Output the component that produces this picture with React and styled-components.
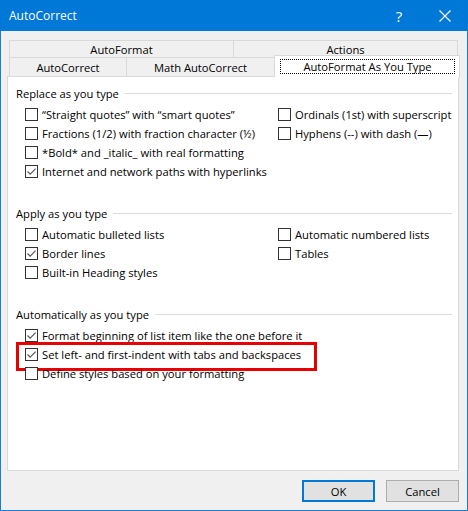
import React from "react";
import styled, { createGlobalStyle, css } from "styled-components";

const GlobalStyle = createGlobalStyle`
  html, body { margin: 0; padding: 0; background: #f0f0f0; }
  body { font-family: "Open Sans", "Noto Sans", sans-serif; font-size: 11.2px; color: #000; }
  * { box-sizing: border-box; }
`;

const Window = styled.div`
  width: 468px;
  height: 511px;
  border: 1px solid #1a7fd4;
  border-top: none;
  background: #f0f0f0;
  display: flex;
  flex-direction: column;
`;

const TitleBar = styled.div`
  height: 31px;
  margin: 0 -1px;
  background: #0078d7;
  color: #fff;
  display: flex;
  align-items: center;
  padding-left: 9px;
  font-size: 12px;
`;

const Title = styled.div`
  flex: 1;
`;

const TitleButton = styled.div`
  width: 46px;
  height: 31px;
  display: flex;
  align-items: center;
  justify-content: center;
  font-size: 15px;
`;

const Body = styled.div`
  flex: 1;
  display: flex;
  flex-direction: column;
  padding: 9px 8px 0 6px;
`;

const TabRow = styled.div`
  display: flex;
  margin: 0 1px 0 2px;
  height: ${(p) => p.h}px;
  position: relative;
`;

const Tab = styled.div`
  flex: ${(p) => (p.w ? `0 0 ${p.w}px` : 1)};
  display: flex;
  align-items: center;
  justify-content: center;
  border: 1px solid #d9d9d9;
  border-bottom: none;
  margin-left: -1px;
  background: #f0f0f0;
  &:first-child { margin-left: 0; }
  ${(p) =>
    p.selected &&
    css`
      background: #fff;
      margin-top: -2px;
      margin-right: -2px;
      height: calc(100% + 3px);
      position: relative;
      z-index: 2;
      padding: 3px 4px 3px 5px;
    `}
`;

const FocusRect = styled.div`
  flex: 1;
  align-self: stretch;
  border: 1px dotted #000;
  display: flex;
  align-items: center;
  justify-content: center;
`;

const Panel = styled.div`
  height: 395px;
  background: #fff;
  border: 1px solid #d9d9d9;
  padding: 9px 6px 0 8px;
  display: flex;
  flex-direction: column;
  gap: 25px;
`;

const Group = styled.div`
  display: flex;
  flex-direction: column;
`;

const GroupHeader = styled.div`
  display: flex;
  align-items: center;
  height: 15px;
  gap: 6px;
  margin-bottom: 4px;
  &::after {
    content: "";
    flex: 1;
    height: 1px;
    background: #dcdcdc;
  }
`;

const Grid = styled.div`
  display: grid;
  grid-template-columns: 253px 1fr;
  grid-auto-rows: 19px;
  padding-left: 9px;
`;

const Row = styled.label`
  display: flex;
  align-items: center;
  gap: 4px;
  grid-column: ${(p) => p.col};
  grid-row: ${(p) => p.row};
  position: relative;
  white-space: nowrap;
  ${(p) =>
    p.highlight &&
    css`
      &::after {
        content: "";
        position: absolute;
        left: -9px;
        top: -3px;
        width: 295px;
        height: 23px;
        border: 3px solid #e80000;
      }
    `}
`;

const Box = styled.span`
  width: 13px;
  height: 13px;
  border: 1px solid #333;
  background: #fff;
  flex: 0 0 13px;
  display: flex;
  align-items: center;
  justify-content: center;
`;

const Footer = styled.div`
  display: flex;
  justify-content: flex-end;
  gap: 11px;
  padding: 9px 0 0 0;
`;

const Button = styled.button`
  width: 73px;
  height: 22px;
  font: inherit;
  font-size: 11.2px;
  color: #000;
  background: #e1e1e1;
  border: 1px solid ${(p) => (p.primary ? "#0078d7" : "#adadad")};
  box-shadow: ${(p) => (p.primary ? "inset 0 0 0 1px #0078d7" : "none")};
  padding: 0;
`;

const Check = ({ checked }) => (
  <Box>
    {checked && (
      <svg width="11" height="11" viewBox="0 0 11 11">
        <path d="M1.5 5.5 L4.2 8.2 L9.6 2.6" fill="none" stroke="#5a5a5a" strokeWidth="1.2" />
      </svg>
    )}
  </Box>
);

const groups = [
  {
    title: "Replace as you type",
    items: [
      { t: "\u201cStraight quotes\u201d with \u201csmart quotes\u201d", col: 1, row: 1 },
      { t: "Fractions (1/2) with fraction character (\u00bd)", col: 1, row: 2 },
      { t: "*Bold* and _italic_ with real formatting", col: 1, row: 3 },
      { t: "Internet and network paths with hyperlinks", col: 1, row: 4, c: true },
      { t: "Ordinals (1st) with superscript", col: 2, row: 1 },
      { t: "Hyphens (--) with dash (\u2014)", col: 2, row: 2 },
    ],
  },
  {
    title: "Apply as you type",
    items: [
      { t: "Automatic bulleted lists", col: 1, row: 1 },
      { t: "Border lines", col: 1, row: 2, c: true },
      { t: "Built-in Heading styles", col: 1, row: 3 },
      { t: "Automatic numbered lists", col: 2, row: 1 },
      { t: "Tables", col: 2, row: 2 },
    ],
  },
  {
    title: "Automatically as you type",
    items: [
      { t: "Format beginning of list item like the one before it", col: "1 / 3", row: 1, c: true },
      { t: "Set left- and first-indent with tabs and backspaces", col: "1 / 3", row: 2, c: true, h: true },
      { t: "Define styles based on your formatting", col: "1 / 3", row: 3 },
    ],
  },
];

export default function App() {
  return (
    <>
      <GlobalStyle />
      <Window>
        <TitleBar>
          <Title>AutoCorrect</Title>
          <TitleButton>?</TitleButton>
          <TitleButton>
            <svg width="12" height="12" viewBox="0 0 12 12">
              <path d="M0.5 0.5 L11.5 11.5 M11.5 0.5 L0.5 11.5" stroke="#fff" strokeWidth="1.1" />
            </svg>
          </TitleButton>
        </TitleBar>
        <Body>
          <TabRow h={17}>
            <Tab>AutoFormat</Tab>
            <Tab>Actions</Tab>
          </TabRow>
          <TabRow h={19}>
            <Tab w={118}>AutoCorrect</Tab>
            <Tab w={149}>Math AutoCorrect</Tab>
            <Tab selected>
              <FocusRect>AutoFormat As You Type</FocusRect>
            </Tab>
          </TabRow>
          <Panel>
            {groups.map((g) => (
              <Group key={g.title}>
                <GroupHeader>{g.title}</GroupHeader>
                <Grid>
                  {g.items.map((it) => (
                    <Row key={it.t} col={it.col} row={it.row} highlight={it.h}>
                      <Check checked={it.c} />
                      {it.t}
                    </Row>
                  ))}
                </Grid>
              </Group>
            ))}
          </Panel>
          <Footer>
            <Button primary>OK</Button>
            <Button>Cancel</Button>
          </Footer>
        </Body>
      </Window>
    </>
  );
}
